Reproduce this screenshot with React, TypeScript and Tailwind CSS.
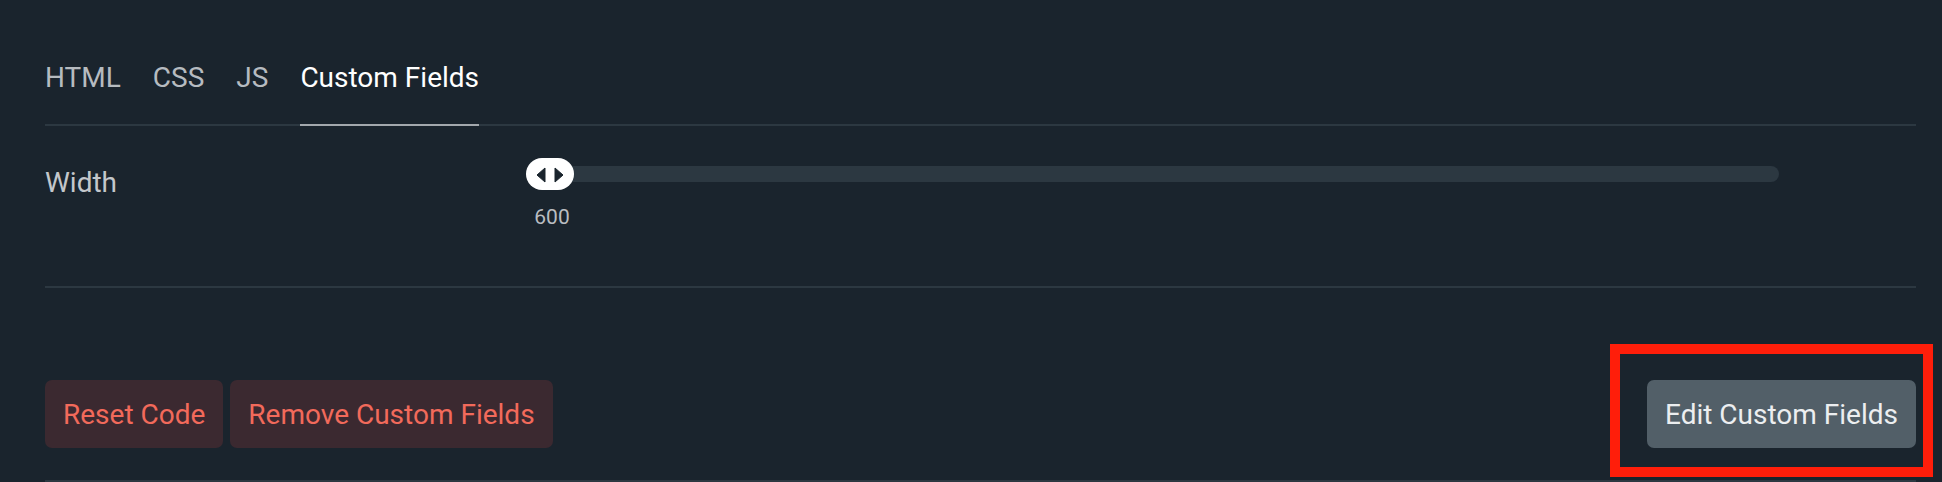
import React, { useState } from 'react';

const tabs = ['HTML', 'CSS', 'JS', 'Custom Fields'];

const SliderThumb = () => (
  <div className="absolute left-0 top-0 w-[48px] h-[32px] rounded-full bg-white flex items-center justify-center">
    <svg width="48" height="32" viewBox="0 0 48 32">
      <polygon points="19,10 19,24 11,17" fill="#1a242d" stroke="#1a242d" strokeWidth="1" strokeLinejoin="round" />
      <polygon points="29,10 29,24 37,17" fill="#1a242d" stroke="#1a242d" strokeWidth="1" strokeLinejoin="round" />
    </svg>
  </div>
);

const App = () => {
  const [active, setActive] = useState('Custom Fields');
  const width = 600;

  return (
    <div className="relative min-h-screen bg-[#1a242d] font-['Roboto','Liberation_Sans',sans-serif]">
      <div className="pl-[45px] pr-[26px] pt-[61px]">
        {/* tabs */}
        <div className="flex gap-[32px] border-b-2 border-[#2c3841]">
          {tabs.map(tab => (
            <button
              key={tab}
              onClick={() => setActive(tab)}
              className={
                tab === active
                  ? 'text-[28px] leading-[33px] pb-[30px] -mb-[2px] border-b-2 border-[#a3a8ad] text-white'
                  : 'text-[28px] leading-[33px] pb-[30px] -mb-[2px] border-b-2 border-transparent text-[#b6bbc0]'
              }
            >
              {tab}
            </button>
          ))}
        </div>

        {/* width field */}
        <div className="flex items-start pt-[32px] pb-[56px] border-b-2 border-[#2c3841]">
          <div className="w-[481px] mt-[8px] text-[28px] leading-[33px] text-[#c3c7cb]">Width</div>
          <div className="w-[1253px]">
            <div className="relative h-[32px] flex items-center">
              <div className="w-full h-[16px] rounded-full bg-[#2c3841]" />
              <SliderThumb />
            </div>
            <div className="w-[52px] mt-[15px] text-center text-[21px] leading-[25px] text-[#b9bdc1]">{width}</div>
          </div>
        </div>

        {/* actions */}
        <div className="flex items-center justify-between pt-[92px] pb-[32px]">
          <div className="flex gap-[7px]">
            <button className="h-[68px] px-[18px] rounded-[7px] bg-[#3b2930] text-[#f26a5b] text-[28px] leading-[33px]">
              Reset Code
            </button>
            <button className="h-[68px] px-[18px] rounded-[7px] bg-[#3b2930] text-[#f26a5b] text-[28px] leading-[33px]">
              Remove Custom Fields
            </button>
          </div>
          <button className="h-[68px] px-[18px] rounded-[7px] bg-[#525f68] text-[#eceef0] text-[28px] leading-[33px]">
            Edit Custom Fields
          </button>
        </div>
        <div className="h-[2px] bg-[#2c3841]" />
      </div>

      {/* highlight annotation */}
      <div className="absolute left-[1610px] top-[344px] w-[323px] h-[133px] border-[10px] border-[#ff1e0a] pointer-events-none" />
    </div>
  );
};

export default App;
